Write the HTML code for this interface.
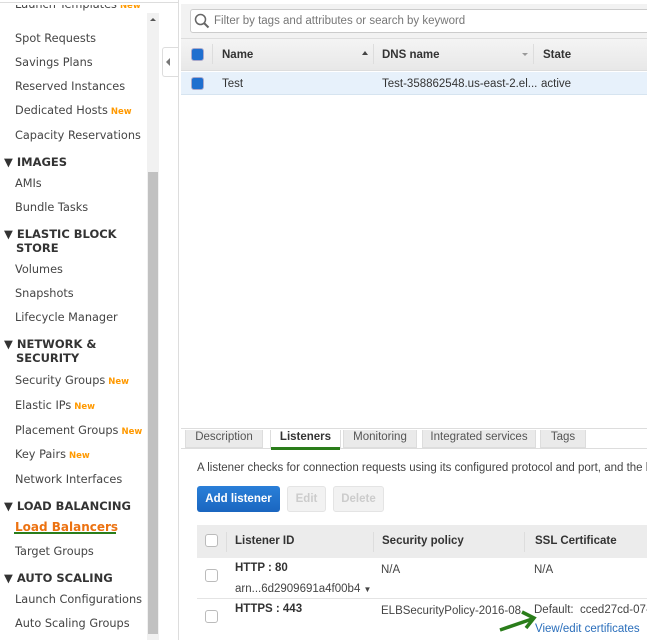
<!DOCTYPE html>
<html><head><style>
*{margin:0;padding:0;box-sizing:border-box}
body{width:647px;height:640px;overflow:hidden;background:#fff;position:relative;font-family:"DejaVu Sans",Verdana,sans-serif}
.a{position:absolute;white-space:nowrap}
.s{font-size:11.3px;color:#444;left:15px}
.h{font-size:11.5px;font-weight:bold;color:#333;left:4px;line-height:14px}
.n{color:#f90;font-size:8.5px;font-weight:bold;margin-left:3px}
.m{font-family:"Liberation Sans",Arial,sans-serif;font-size:11.5px;color:#333}
.b{font-weight:bold}
.cb{position:absolute;width:13px;height:13px;border-radius:3px}
.blue{background:#1f6fcf;border:1px solid #aac}
.wh{background:#fff;border:1px solid #bbb}
.tab{position:absolute;top:430px;height:18px;background:#eaeaea;border:1px solid #ddd;border-top:none;font-family:"Liberation Sans",Arial,sans-serif;font-size:11.5px;color:#555;text-align:center;line-height:14px;overflow:hidden}
</style></head><body>
<!-- sidebar -->
<div class="a" style="left:0;top:0;width:178px;height:3px;border-bottom:1px solid #ddd"></div>
<div class="a s" style="top:5px;height:11px;overflow:hidden"><span style="position:relative;top:-7px">Launch Templates<span class="n">New</span></span></div>
<div class="a s" style="top:32px">Spot Requests</div>
<div class="a s" style="top:56px">Savings Plans</div>
<div class="a s" style="top:80px">Reserved Instances</div>
<div class="a s" style="top:104px">Dedicated Hosts<span class="n">New</span></div>
<div class="a s" style="top:129px">Capacity Reservations</div>
<div class="a h" style="top:155px">▼ IMAGES</div>
<div class="a s" style="top:177px">AMIs</div>
<div class="a s" style="top:201px">Bundle Tasks</div>
<div class="a h" style="top:227px">▼ ELASTIC BLOCK<br>&nbsp;&nbsp;&nbsp;STORE</div>
<div class="a s" style="top:263px">Volumes</div>
<div class="a s" style="top:287px">Snapshots</div>
<div class="a s" style="top:311px">Lifecycle Manager</div>
<div class="a h" style="top:337px">▼ NETWORK &amp;<br>&nbsp;&nbsp;&nbsp;SECURITY</div>
<div class="a s" style="top:374px">Security Groups<span class="n">New</span></div>
<div class="a s" style="top:399px">Elastic IPs<span class="n">New</span></div>
<div class="a s" style="top:424px">Placement Groups<span class="n">New</span></div>
<div class="a s" style="top:448px">Key Pairs<span class="n">New</span></div>
<div class="a s" style="top:473px">Network Interfaces</div>
<div class="a h" style="top:499px">▼ LOAD BALANCING</div>
<div class="a s" style="top:520px;color:#ec7211;font-weight:bold;font-size:12px">Load Balancers</div>
<div class="a" style="left:14px;top:532px;width:102px;height:2px;background:#2a7d1a"></div>
<div class="a s" style="top:545px">Target Groups</div>
<div class="a h" style="top:571px">▼ AUTO SCALING</div>
<div class="a s" style="top:593px">Launch Configurations</div>
<div class="a s" style="top:617px">Auto Scaling Groups</div>
<!-- scrollbar -->
<div class="a" style="left:147px;top:13px;width:12px;height:627px;background:#f1f1f1"></div>
<div class="a" style="left:148px;top:172px;width:10px;height:462px;background:#c1c1c1"></div>
<div class="a" style="left:150px;top:18px;width:0;height:0;border-left:3px solid transparent;border-right:3px solid transparent;border-bottom:3px solid #555"></div>
<div class="a" style="left:162px;top:47px;width:17px;height:30px;background:#fff;border:1px solid #ddd;border-right:none;border-radius:3px 0 0 3px"></div>
<div class="a" style="left:166px;top:58px;width:0;height:0;border-top:4px solid transparent;border-bottom:4px solid transparent;border-right:4px solid #777"></div>
<div class="a" style="left:178px;top:0;width:1px;height:640px;background:#ddd"></div>
<!-- main top -->
<div class="a" style="left:181px;top:0;width:466px;height:38px;background:#f2f2f2;border-top:4px solid #fff"></div>
<div class="a" style="left:190px;top:9px;width:460px;height:24px;background:#fff;border:1px solid #ccc;border-radius:3px"></div>
<svg class="a" style="left:194px;top:13px" width="16" height="16"><circle cx="6.5" cy="6.5" r="5" fill="none" stroke="#666" stroke-width="1.5"/><path d="M10 10l4.5 4.5" stroke="#666" stroke-width="2"/></svg>
<div class="a m" style="left:214px;top:15px;color:#777;font-size:11.5px">Filter by tags and attributes or search by keyword</div>
<div class="a" style="left:181px;top:38px;width:466px;height:33px;background:linear-gradient(#f4f4f4,#e8e8e8);border-top:1px solid #ddd;border-bottom:1px solid #ddd"></div>
<div class="cb blue" style="left:191px;top:48px"></div>
<div class="a" style="left:212px;top:44px;width:1px;height:20px;background:#ddd"></div>
<div class="a m b" style="left:222px;top:49px">Name</div>
<div class="a" style="left:362px;top:51px;border-left:3.5px solid transparent;border-right:3.5px solid transparent;border-bottom:4px solid #444"></div>
<div class="a" style="left:373px;top:44px;width:1px;height:20px;background:#ddd"></div>
<div class="a m b" style="left:382px;top:49px">DNS name</div>
<div class="a" style="left:522px;top:53px;border-left:3px solid transparent;border-right:3px solid transparent;border-top:3px solid #999"></div>
<div class="a" style="left:533px;top:44px;width:1px;height:20px;background:#ddd"></div>
<div class="a m b" style="left:543px;top:49px">State</div>
<div class="a" style="left:181px;top:72px;width:466px;height:23px;background:#e7f1fb;border-bottom:1px solid #d6e4f0"></div>
<div class="cb blue" style="left:191px;top:77px"></div>
<div class="a m" style="left:222px;top:78px">Test</div>
<div class="a m" style="left:382px;top:78px">Test-358862548.us-east-2.el...</div>
<div class="a m" style="left:541px;top:78px">active</div>
<!-- bottom panel -->
<div class="a" style="left:181px;top:428px;width:466px;height:1px;background:#ddd"></div>
<div class="a" style="left:181px;top:448px;width:466px;height:1px;background:#ddd"></div>
<div class="tab" style="left:185px;width:78px"><span style="position:relative;top:0px">Description</span></div>
<div class="tab" style="left:270px;width:71px;background:#fff;font-weight:bold;color:#333"><span style="position:relative;top:0px">Listeners</span></div>
<div class="a" style="left:271px;top:447px;width:69px;height:3px;background:#2a7d1a"></div>
<div class="tab" style="left:343px;width:74px"><span style="position:relative;top:0px">Monitoring</span></div>
<div class="tab" style="left:422px;width:114px"><span style="position:relative;top:0px">Integrated services</span></div>
<div class="tab" style="left:540px;width:46px"><span style="position:relative;top:0px">Tags</span></div>
<div class="a m" style="left:197px;top:462px;color:#444">A listener checks for connection requests using its configured protocol and port, and the load</div>
<div class="a m b" style="left:197px;top:486px;width:83px;height:26px;background:linear-gradient(#2a7fd8,#1a66c0);border-radius:3px;color:#fff;line-height:26px;text-align:center">Add listener</div>
<div class="a m" style="left:287px;top:486px;width:39px;height:26px;background:#f2f2f2;border:1px solid #e4e4e4;border-radius:3px;color:#ccc;line-height:24px;text-align:center;font-weight:bold">Edit</div>
<div class="a m" style="left:333px;top:486px;width:51px;height:26px;background:#f2f2f2;border:1px solid #e4e4e4;border-radius:3px;color:#ccc;line-height:24px;text-align:center;font-weight:bold">Delete</div>
<div class="a" style="left:197px;top:525px;width:450px;height:33px;background:#ececec"></div>
<div class="cb wh" style="left:205px;top:534px"></div>
<div class="a" style="left:226px;top:532px;width:1px;height:20px;background:#ddd"></div>
<div class="a m b" style="left:235px;top:535px">Listener ID</div>
<div class="a" style="left:373px;top:532px;width:1px;height:20px;background:#ddd"></div>
<div class="a m b" style="left:382px;top:535px">Security policy</div>
<div class="a" style="left:524px;top:532px;width:1px;height:20px;background:#ddd"></div>
<div class="a m b" style="left:535px;top:535px">SSL Certificate</div>
<div class="cb wh" style="left:205px;top:569px"></div>
<div class="a m b" style="left:235px;top:562px">HTTP : 80</div>
<div class="a m" style="left:235px;top:583px;color:#444">arn...6d2909691a4f00b4 <span style="font-size:8px">▼</span></div>
<div class="a m" style="left:381px;top:564px;color:#444">N/A</div>
<div class="a m" style="left:534px;top:564px;color:#444">N/A</div>
<div class="a" style="left:197px;top:598px;width:450px;height:1px;background:#e4e4e4"></div>
<div class="cb wh" style="left:205px;top:610px"></div>
<div class="a m b" style="left:235px;top:603px">HTTPS : 443</div>
<div class="a m" style="left:381px;top:605px;color:#444">ELBSecurityPolicy-2016-08</div>
<div class="a m" style="left:534px;top:604px;color:#444">Default: &nbsp;cced27cd-07-</div>
<div class="a m" style="left:535px;top:623px;color:#2a6ebb">View/edit certificates</div>
<svg class="a" style="left:498px;top:606px" width="40" height="30"><path d="M2 24L34 13" stroke="#2a7d1a" stroke-width="3.5"/><path d="M24 6L36 12L28 22" fill="none" stroke="#2a7d1a" stroke-width="3.5"/></svg>
</body></html>
